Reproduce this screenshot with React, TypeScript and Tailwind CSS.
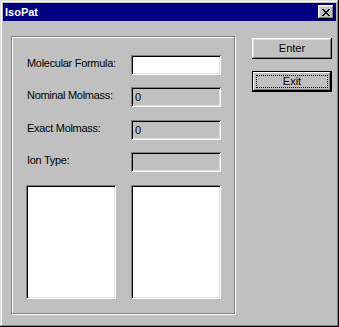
import React from 'react'

const raised =
  'shadow-[inset_-1px_-1px_0_#000,inset_1px_1px_0_#fff,inset_-2px_-2px_0_#808080,inset_2px_2px_0_#dfdfdf]'
const sunken =
  'shadow-[inset_1px_1px_0_#808080,inset_-1px_-1px_0_#fff,inset_2px_2px_0_#000,inset_-2px_-2px_0_#dfdfdf]'

function CloseGlyph() {
  // classic 8x7 pixel X
  const rows = ['XX....XX', '.XX..XX.', '..XXXX..', '...XX...', '..XXXX..', '.XX..XX.', 'XX....XX']
  return (
    <svg width="8" height="7" viewBox="0 0 8 7" shapeRendering="crispEdges">
      {rows.flatMap((r, y) =>
        r.split('').map((c, x) => (c === 'X' ? <rect key={`${x}-${y}`} x={x} y={y} width="1" height="1" fill="#000" /> : null))
      )}
    </svg>
  )
}

function Row({ label, value, white, className }: { label: string; value?: string; white?: boolean; className?: string }) {
  return (
    <div className={`flex items-start h-[20px] pl-[15px] ${className ?? ''}`}>
      <span className="w-[104px] pt-[2px] leading-[13px] tracking-[-0.3px]">{label}</span>
      <div
        className={`w-[90px] h-[20px] pl-[4px] pt-[4px] leading-[13px] ${sunken} ${white ? 'bg-white' : 'bg-[#c0c0c0]'}`}
      >
        {value}
      </div>
    </div>
  )
}

export default function App() {
  return (
    <div className="w-[339px] h-[327px] bg-[#c0c0c0] p-[3px] flex flex-col font-['Liberation_Sans',Arial,sans-serif] text-[11px] text-black shadow-[inset_-1px_-1px_0_#000,inset_1px_1px_0_#dfdfdf,inset_-2px_-2px_0_#808080,inset_2px_2px_0_#fff]">
      <div className="h-[18px] bg-[#000080] flex items-center justify-between pl-[2px] pr-[2px]">
        <span className="text-white font-bold text-[11px] leading-[13px]">IsoPat</span>
        <div className={`w-[16px] h-[14px] bg-[#c0c0c0] flex items-center justify-center pl-[0px] ${raised}`}>
          <CloseGlyph />
        </div>
      </div>

      <div className="flex items-start">
        <div className="mt-[15px] ml-[8px] w-[224px] h-[278px] border border-[#808080] shadow-[1px_1px_0_#fff,inset_1px_1px_0_#fff] pt-[18px]">
          <Row label="Molecular Formula:" white />
          <Row label="Nominal Molmass:" value="0" className="mt-[12px]" />
          <Row label="Exact Molmass:" value="0" className="mt-[13px]" />
          <Row label="Ion Type:" className="mt-[12px]" />
          <div className="flex gap-[15px] pl-[14px] mt-[13px]">
            <div className={`w-[90px] h-[114px] bg-white ${sunken}`} />
            <div className={`w-[90px] h-[114px] bg-white ${sunken}`} />
          </div>
        </div>

        <div className="ml-[17px] mt-[17px] flex flex-col">
          <button className={`w-[80px] h-[21px] bg-[#c0c0c0] text-[11px] leading-[13px] ${raised}`}>Enter</button>
          <button className="mt-[12px] w-[80px] h-[21px] bg-[#c0c0c0] text-[11px] leading-[13px] border border-black p-[3px] shadow-[inset_-1px_-1px_0_#000,inset_1px_1px_0_#fff,inset_-2px_-2px_0_#808080]">
            <span className="flex h-full items-center justify-center border border-dotted border-black">Exit</span>
          </button>
        </div>
      </div>
    </div>
  )
}
